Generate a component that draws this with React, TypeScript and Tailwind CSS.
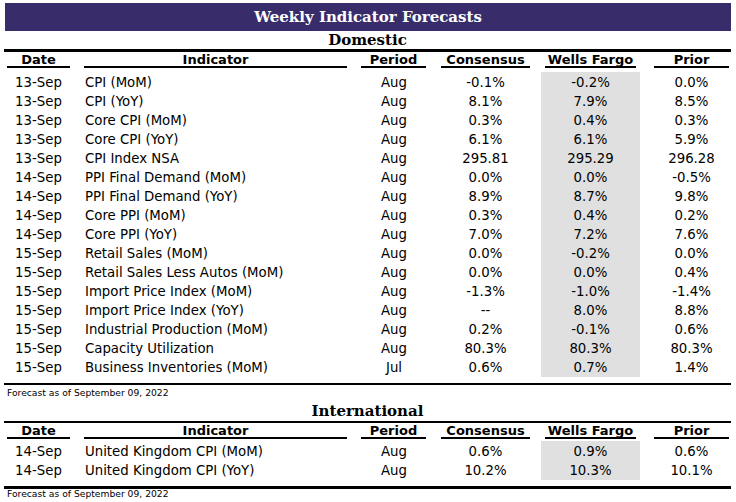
const SANS = "font-['Verdana','DejaVu_Sans',sans-serif]";

type Row = [string, string, string, string, string, string];

const DOMESTIC: Row[] = [
  ['13-Sep', 'CPI (MoM)', 'Aug', '-0.1%', '-0.2%', '0.0%'],
  ['13-Sep', 'CPI (YoY)', 'Aug', '8.1%', '7.9%', '8.5%'],
  ['13-Sep', 'Core CPI (MoM)', 'Aug', '0.3%', '0.4%', '0.3%'],
  ['13-Sep', 'Core CPI (YoY)', 'Aug', '6.1%', '6.1%', '5.9%'],
  ['13-Sep', 'CPI Index NSA', 'Aug', '295.81', '295.29', '296.28'],
  ['14-Sep', 'PPI Final Demand (MoM)', 'Aug', '0.0%', '0.0%', '-0.5%'],
  ['14-Sep', 'PPI Final Demand (YoY)', 'Aug', '8.9%', '8.7%', '9.8%'],
  ['14-Sep', 'Core PPI (MoM)', 'Aug', '0.3%', '0.4%', '0.2%'],
  ['14-Sep', 'Core PPI (YoY)', 'Aug', '7.0%', '7.2%', '7.6%'],
  ['15-Sep', 'Retail Sales (MoM)', 'Aug', '0.0%', '-0.2%', '0.0%'],
  ['15-Sep', 'Retail Sales Less Autos (MoM)', 'Aug', '0.0%', '0.0%', '0.4%'],
  ['15-Sep', 'Import Price Index (MoM)', 'Aug', '-1.3%', '-1.0%', '-1.4%'],
  ['15-Sep', 'Import Price Index (YoY)', 'Aug', '--', '8.0%', '8.8%'],
  ['15-Sep', 'Industrial Production (MoM)', 'Aug', '0.2%', '-0.1%', '0.6%'],
  ['15-Sep', 'Capacity Utilization', 'Aug', '80.3%', '80.3%', '80.3%'],
  ['15-Sep', 'Business Inventories (MoM)', 'Jul', '0.6%', '0.7%', '1.4%'],
];

const INTERNATIONAL: Row[] = [
  ['14-Sep', 'United Kingdom CPI (MoM)', 'Aug', '0.6%', '0.9%', '0.6%'],
  ['14-Sep', 'United Kingdom CPI (YoY)', 'Aug', '10.2%', '10.3%', '10.1%'],
];

const GRID = 'grid grid-cols-[69px_285px_72px_111px_99px_91px]';

function HeaderRow({ top }: { top: string }) {
  const cell = 'block border-b-2 border-black text-center';
  return (
    <div className={`${GRID} ${top} text-[13px] leading-[12px] font-bold text-black`}>
      <div><span className={`${cell} mx-[3px]`}>Date</span></div>
      <div><span className={`${cell} mx-[11px]`}>Indicator</span></div>
      <div><span className={`${cell} ml-[3px] mr-[4px]`}>Period</span></div>
      <div><span className={`${cell} mx-[11px]`}>Consensus</span></div>
      <div><span className={`${cell} mx-[4px]`}>Wells Fargo</span></div>
      <div><span className={`${cell} ml-[14px] mr-[2px]`}>Prior</span></div>
    </div>
  );
}

function DataRows({ rows, top }: { rows: Row[]; top: string }) {
  const c = 'pt-[2px] leading-[17px]';
  return (
    <div className={`${GRID} ${top} text-[13.3px] text-black`}>
      {rows.map((r, i) => (
        <div key={i} className="contents">
          <div className={`${c} text-center`}>{r[0]}</div>
          <div className={`${c} pl-[12px] whitespace-nowrap`}>{r[1]}</div>
          <div className={`${c} text-center`}>{r[2]}</div>
          <div className={`${c} text-center`}>{r[3]}</div>
          <div className={`${c} text-center bg-[#e0e0e0] ${i === rows.length - 1 ? 'pb-[1px]' : ''}`}>{r[4]}</div>
          <div className={`${c} pl-[12px] text-center`}>{r[5]}</div>
        </div>
      ))}
    </div>
  );
}

function SectionTitle({ text, h }: { text: string; h: string }) {
  return (
    <div className={`${h} text-center font-bold text-[15px] text-black font-['DejaVu_Serif','Liberation_Serif',serif]`}>
      {text}
    </div>
  );
}

function Footnote({ h }: { h: string }) {
  return <div className={`${h} pl-[3px] text-[9.2px] text-black`}>Forecast as of September 09, 2022</div>;
}

export default function App() {
  return (
    <div className={`w-[736px] h-[502px] overflow-hidden bg-white ${SANS}`}>
      <div className="ml-[4px] w-[727px] pt-[3px]">
        <div className="ml-[1px] h-[28px] bg-[#382c6a] flex items-center justify-center">
          <span className="text-white font-bold text-[15px] font-['DejaVu_Serif','Liberation_Serif',serif]">
            Weekly Indicator Forecasts
          </span>
        </div>

        {/* Domestic */}
        <SectionTitle text="Domestic" h="h-[18px] leading-[18px]" />
        <div className="h-[3px] bg-black" />
        <HeaderRow top="pt-[2px]" />
        <DataRows rows={DOMESTIC} top="mt-[4px]" />
        <div className="mt-[6px] h-[2px] bg-black" />
        <Footnote h="h-[16px] leading-[16px]" />

        {/* International */}
        <SectionTitle text="International" h="h-[20px] leading-[20px]" />
        <div className="h-[2px] bg-black" />
        <HeaderRow top="pt-[1.5px]" />
        <DataRows rows={INTERNATIONAL} top="mt-[2px]" />
        <div className="mt-[6px] h-[3px] bg-black" />
        <Footnote h="h-[10px] leading-[10px]" />
      </div>
    </div>
  );
}
